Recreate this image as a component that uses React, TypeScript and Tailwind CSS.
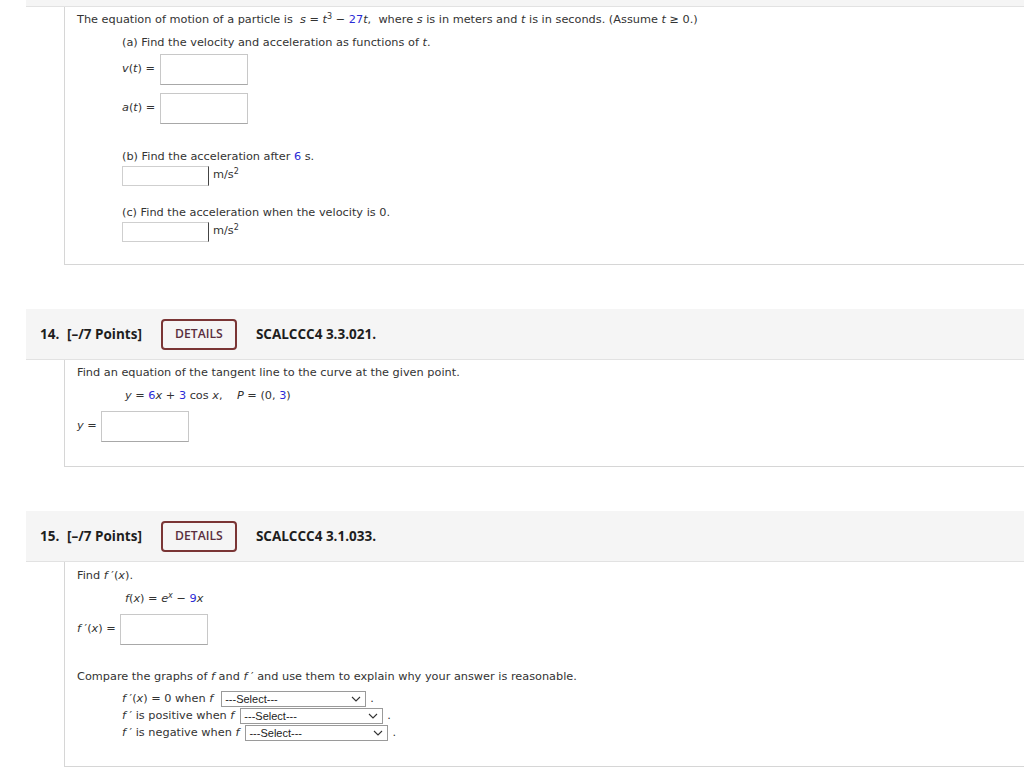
import React from 'react';

const body = 'font-["DejaVu_Sans","Liberation_Sans",sans-serif] text-[11.3px] text-[#333]';

const V = ({ children }: { children: React.ReactNode }) => <i className="italic">{children}</i>;
const B = ({ children }: { children: React.ReactNode }) => <span className="text-[#2a2ad6]">{children}</span>;

const AnswerBox = ({ w = 'w-[88px]', h = 'h-[31px]' }: { w?: string; h?: string }) => (
  <div className={`${w} ${h} border border-[#c8c8c8] border-b-[#a8a8a8] bg-white`} />
);

const UnitBox = () => (
  <div className="flex items-center">
    <div className="w-[87px] h-[20px] border border-[#cfcfcf] border-r-[#444] bg-white" />
    <span className="ml-[4px] -mt-[2px]">
      m/s<sup className="text-[8px]">2</sup>
    </span>
  </div>
);

const Select = ({ w }: { w: string }) => (
  <div className={`${w} h-[16px] border border-[#9a9a9a] bg-white flex items-center justify-between pl-[3px] pr-[4px] font-["Liberation_Sans",sans-serif] text-[11px] text-[#222]`}>
    <span>---Select---</span>
    <svg width="10" height="6" viewBox="0 0 10 6" fill="none">
      <path d="M1 1 L5 5 L9 1" stroke="#333" strokeWidth="1.1" />
    </svg>
  </div>
);

const Header = ({ num, code }: { num: string; code: string }) => (
  <div className="h-[51px] bg-[#f5f5f5] border-b border-[#e2e2e2] flex items-center pl-[14px] font-['Open_Sans',sans-serif] text-[13.5px] font-bold text-[#1e1e1e]">
    <span className="w-[27px]">{num}</span>
    <span>[–/7 Points]</span>
    <div className="ml-[19px] w-[76px] h-[31px] border-2 border-[#7a3535] rounded-[4px] flex items-center justify-center text-[12.2px] font-semibold text-[#5a2e3e]">
      DETAILS
    </div>
    <span className="ml-[19px]">{code}</span>
  </div>
);

export default function App() {
  return (
    <div className={`w-[1024px] h-[776px] bg-white overflow-hidden pl-[26px] ${body}`}>
      <div className="h-[7px] bg-[#f5f5f5] border-b border-[#e2e2e2]" />

      {/* problem 13 continuation */}
      <div className="ml-[38px] h-[258px] border-l border-b border-[#d6d6d6] pl-[12px]">
        <div className="pt-[5px] h-[21px] leading-[16px]">
          The equation of motion of a particle is&nbsp; <V>s</V> = <V>t</V>
          <sup className="text-[8px]">3</sup> − <B>27</B>
          <V>t</V>,&nbsp; where <V>s</V> is in meters and <V>t</V> is in seconds. (Assume <V>t</V> ≥ 0.)
        </div>
        <div className="pl-[45px]">
          <div className="mt-[7px] leading-[16px]">
            (a) Find the velocity and acceleration as functions of <V>t</V>.
          </div>
          <div className="mt-[3px] flex items-center">
            <span className="w-[38px]">
              <V>v</V>(<V>t</V>) =
            </span>
            <AnswerBox />
          </div>
          <div className="mt-[8px] flex items-center">
            <span className="w-[38px]">
              <V>a</V>(<V>t</V>) =
            </span>
            <AnswerBox />
          </div>
          <div className="mt-[25px] leading-[16px]">
            (b) Find the acceleration after <B>6</B> s.
          </div>
          <div className="mt-[1px]">
            <UnitBox />
          </div>
          <div className="mt-[19px] leading-[16px]">(c) Find the acceleration when the velocity is 0.</div>
          <div className="mt-[1px]">
            <UnitBox />
          </div>
        </div>
      </div>

      <div className="h-[44px]" />
      <Header num="14." code="SCALCCC4 3.3.021." />
      <div className="ml-[38px] h-[107px] border-l border-b border-[#d6d6d6] pl-[12px]">
        <div className="pt-[5px] leading-[16px]">Find an equation of the tangent line to the curve at the given point.</div>
        <div className="mt-[7px] pl-[48px] leading-[16px]">
          <V>y</V> = <B>6</B>
          <V>x</V> + <B>3</B> cos <V>x</V>,&nbsp;&nbsp;&nbsp; <V>P</V> = (0, <B>3</B>)
        </div>
        <div className="mt-[7px] flex items-center">
          <span className="w-[24px]">
            <V>y</V> =
          </span>
          <AnswerBox />
        </div>
      </div>

      <div className="h-[44px]" />
      <Header num="15." code="SCALCCC4 3.1.033." />
      <div className="ml-[38px] h-[205px] border-l border-b border-[#d6d6d6] pl-[12px]">
        <div className="pt-[6px] leading-[16px]">
          Find <V>f</V> ′(<V>x</V>).
        </div>
        <div className="mt-[7px] pl-[48px] leading-[16px]">
          <V>f</V>(<V>x</V>) = <V>e</V>
          <sup className="text-[8px]">
            <V>x</V>
          </sup>{' '}
          − <B>9</B>
          <V>x</V>
        </div>
        <div className="mt-[7px] flex items-center">
          <span className="w-[43px]">
            <V>f</V> ′(<V>x</V>) =
          </span>
          <AnswerBox />
        </div>
        <div className="mt-[24px] leading-[16px]">
          Compare the graphs of <V>f</V> and <V>f</V> ′ and use them to explain why your answer is reasonable.
        </div>
        <div className="pl-[45px] mt-[6px] flex flex-col gap-[1px]">
          <div className="flex items-center h-[16px]">
            <span className="mr-[8px]">
              <V>f</V> ′(<V>x</V>) = 0 when <V>f</V>
            </span>
            <Select w="w-[145px]" />
            <span className="ml-[4px]">.</span>
          </div>
          <div className="flex items-center h-[16px]">
            <span className="mr-[6px]">
              <V>f</V> ′ is positive when <V>f</V>
            </span>
            <Select w="w-[143px]" />
            <span className="ml-[4px]">.</span>
          </div>
          <div className="flex items-center h-[16px]">
            <span className="mr-[6px]">
              <V>f</V> ′ is negative when <V>f</V>
            </span>
            <Select w="w-[143px]" />
            <span className="ml-[4px]">.</span>
          </div>
        </div>
      </div>
    </div>
  );
}
